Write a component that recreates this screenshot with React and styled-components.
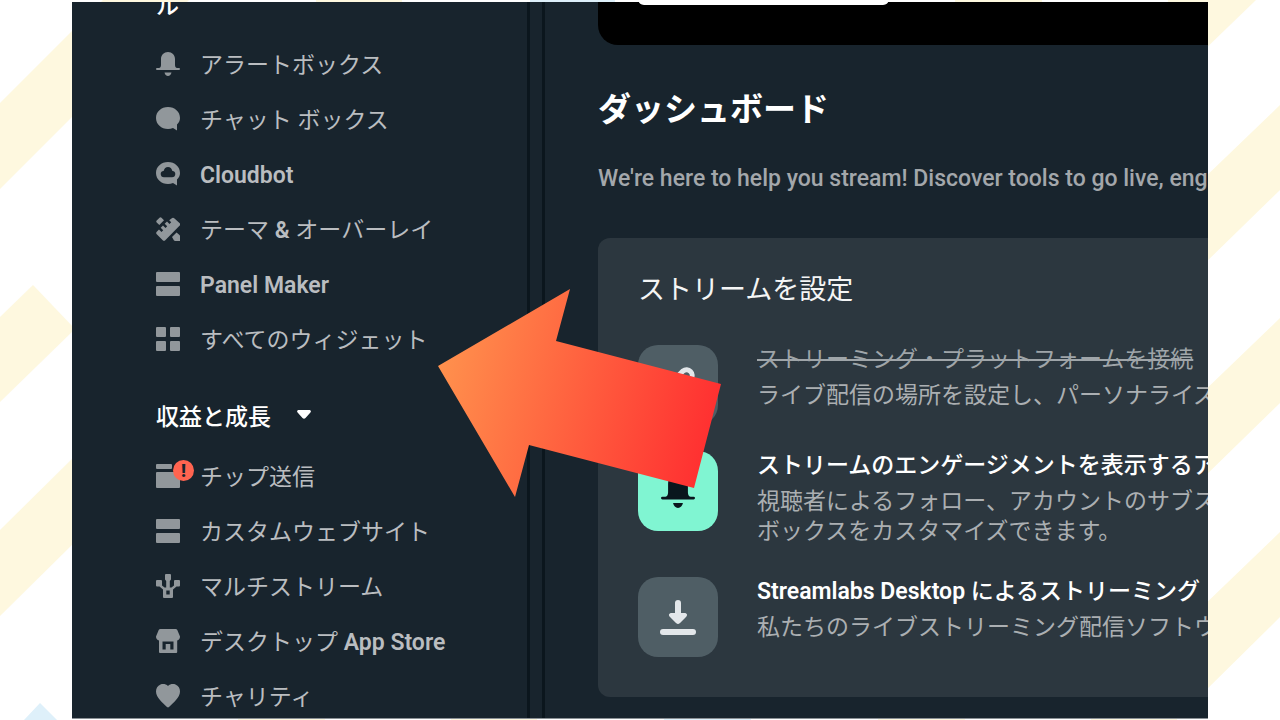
import React from "react";
import styled, { createGlobalStyle } from "styled-components";

const GlobalStyle = createGlobalStyle`
  * {
    box-sizing: border-box;
  }

  body {
    margin: 0;
    background: #fff;
    font-family: Roboto, "Noto Sans CJK JP", sans-serif;
  }
`;

const Page = styled.div`
  position: relative;
  height: 100vh;
  padding: 2px 72px 1px;
  overflow: hidden;
`;

const Backdrop = styled.svg`
  position: absolute;
  inset: 0;
  width: 100%;
  height: 100%;
`;

const Arrow = styled.svg`
  position: absolute;
  left: 438px;
  top: 289px;
  width: 284px;
  height: 209px;
`;

const Frame = styled.div`
  position: relative;
  display: flex;
  gap: 12px;
  height: 100%;
  overflow: hidden;
  border-bottom: 1px solid #8b9196;
  background: #18242d;
`;

const Sidebar = styled.nav`
  flex: 0 0 458px;
  padding-left: 84px;
  border-right: 3px solid #0b161d;
`;

const GroupTitle = styled.h2`
  display: flex;
  align-items: center;
  gap: 26px;
  height: 36px;
  margin: ${(props) => (props.$clipped ? "-16px 0 14px" : "31px 0 15px")};
  font-size: 23px;
  font-weight: 500;
  color: #fff;
`;

const MenuList = styled.ul`
  margin: 0;
  padding: 0;
  list-style: none;
`;

const MenuLink = styled.a`
  display: flex;
  align-items: center;
  gap: 20px;
  height: 55px;
  font-size: 23px;
  font-weight: ${(props) => (props.$latin ? 600 : 400)};
  line-height: 32px;
  color: #babdc0;
  text-decoration: none;
  white-space: nowrap;

  b {
    font-weight: 600;
  }
`;

const MenuLabel = styled.span`
  padding-top: 4px;
`;

const IconBox = styled.span`
  position: relative;
  display: flex;
  width: 24px;
  height: 24px;
  color: #91979b;
`;

const Badge = styled.span`
  position: absolute;
  top: -4px;
  right: -14px;
  width: 21px;
  height: 21px;
  border-radius: 50%;
  background: #ff6450;
  color: #18242d;
  font-size: 18px;
  font-weight: 900;
  line-height: 21px;
  text-align: center;
`;

const Main = styled.main`
  flex: 1;
  min-width: 0;
  padding-left: 53px;
  border-left: 3px solid #0b161d;
  white-space: nowrap;
  overflow: hidden;
`;

const Banner = styled.div`
  display: flex;
  align-items: flex-end;
  height: 43px;
  padding: 0 40px 40px;
  border-radius: 0 0 0 20px;
  background: #000;
`;

const BannerButton = styled.button`
  flex: 0 0 251px;
  height: 40px;
  border: 0;
  border-radius: 6px;
  background: #fff;
`;

const Title = styled.h1`
  margin: 41px 0 0;
  font-size: 33px;
  font-weight: 700;
  line-height: 48px;
  color: #fff;
`;

const Intro = styled.p`
  margin: 29px 0 0;
  font-size: 23px;
  font-weight: 500;
  line-height: 32px;
  color: #a3a7ab;
`;

const Card = styled.section`
  height: 459px;
  margin-top: 43px;
  padding: 32px 0 0 40px;
  border-radius: 12px 0 0 12px;
  background: #2c373f;
`;

const CardTitle = styled.h2`
  margin: 0 0 35px;
  font-size: 27px;
  font-weight: 400;
  line-height: 40px;
  color: #f4f5f5;
`;

const Step = styled.div`
  display: flex;
  gap: 39px;
  min-height: 80px;
  margin-bottom: ${(props) => (props.$tall ? 30 : 26)}px;
`;

const StepIcon = styled.div`
  display: flex;
  flex: 0 0 80px;
  align-items: center;
  justify-content: center;
  height: 80px;
  border-radius: 20px;
  background: ${(props) => (props.$active ? "#80f5d2" : "#4f5e65")};
  color: ${(props) => (props.$active ? "#09161d" : "#e3e7ea")};
`;

const StepTitle = styled.h3`
  margin: -1px 0 5px;
  font-size: 23px;
  font-weight: ${(props) => (props.$done ? 400 : 500)};
  line-height: 32px;
  color: ${(props) => (props.$done ? "#9fa5a9" : "#fff")};
  text-decoration: ${(props) => (props.$done ? "line-through" : "none")};

  b {
    font-weight: 600;
  }
`;

const StepText = styled.p`
  margin: 0;
  font-size: 23px;
  line-height: 30px;
  color: #abafb2;
`;

const icons = {
  bell: (
    <path d="M12 0C8 0 5 3 5 7v6c0 2-1 3-2 3H1a1 1 0 0 0 0 2h22a1 1 0 0 0 0-2h-2c-1 0-2-1-2-3V7c0-4-3-7-7-7zM8.500 20.500h7c-.5 2-1.700 3.500-3.500 3.500s-3-1.500-3.500-3.500z" />
  ),
  chat: (
    <path d="M12 0C5.300 0 0 4.700 0 11s5.300 11 12 11c1.800 0 3.500-.4 5-1l4 2.500V17.500c2-1.700 3-4 3-6.500C24 4.700 18.700 0 12 0z" />
  ),
  cloudbot: (
    <path
      fillRule="evenodd"
      d="M12 0C5.300 0 0 4.700 0 11s5.300 11 12 11c1.800 0 3.500-.4 5-1l4 2.500V17.500c2-1.700 3-4 3-6.500C24 4.700 18.700 0 12 0zM12 5c2.300 0 3.800 1.500 4.200 3.700 2 .4 3.100 1.500 3.100 3.300 0 2-1.300 3.300-3.300 3.300H8c-2 0-3.300-1.300-3.300-3.300 0-1.800 1.100-2.900 3.100-3.300C8.200 6.500 9.700 5 12 5z"
    />
  ),
  design: (
    <>
      <path d="M15.500 1.500a2 2 0 0 1 3 0L23.500 6a2 2 0 0 1 0 2.800L9.500 23a2 2 0 0 1-3 0L1 17.500a2 2 0 0 1 0-3l2-2 2.500 2.500 1.700-1.700-2.500-2.500L7 8.500 9.500 11l1.700-1.700-2.500-2.500L11 4.500 13.500 7l1.700-1.700-2-2z" />
      <path d="M3.500.8a1.500 1.500 0 0 1 2 0L8 3.300 3.300 8 .7 5.500a1.500 1.500 0 0 1 0-2zM16 20l4.500-4.500L23.500 18a2 2 0 0 1 .5 1.500V24h-4.500a2 2 0 0 1-1.500-.5z" />
    </>
  ),
  panels: (
    <>
      <rect width="24" height="10" rx="1" />
      <rect width="24" height="10" y="14" rx="1" />
    </>
  ),
  grid: (
    <>
      <rect width="10" height="10" rx="1" />
      <rect x="14" width="10" height="10" rx="1" />
      <rect y="14" width="10" height="10" rx="1" />
      <rect x="14" y="14" width="10" height="10" rx="1" />
    </>
  ),
  tip: (
    <>
      <rect width="16" height="5" rx="1" />
      <rect y="8" width="24" height="16" rx="1" />
    </>
  ),
  multi: (
    <path
      fillRule="evenodd"
      d="M10 0h4a1 1 0 0 1 1 1v4.500l-1.200 1.500v6.500h1.700l2.500-2V7a1 1 0 0 1 1-1h4a1 1 0 0 1 1 1v4.500a1 1 0 0 1-1 1h-2.500L17 15.500V23a1 1 0 0 1-1 1H8a1 1 0 0 1-1-1v-7.500L3.500 12.500H1a1 1 0 0 1-1-1V7a1 1 0 0 1 1-1h4a1 1 0 0 1 1 1v4.500l2.500 2h1.700V7L9 5.500V1a1 1 0 0 1 1-1zM10.300 16.500v4h3.400v-4z"
    />
  ),
  store: (
    <path
      fillRule="evenodd"
      d="M4.500 0h15a2 2 0 0 1 1.800 1L24 7.500c0 2-1 3.500-2.800 4V23a1 1 0 0 1-1 1H4a1 1 0 0 1-1-1V11.500C1 11 0 9.500 0 7.500L2.700 1A2 2 0 0 1 4.500 0zM6.500 12.500v8h3.200V15h4.600v5.500h3.200v-8z"
    />
  ),
  heart: (
    <path d="M12 2C14 0 17-.5 19.500.5 22.500 1.700 24 4.500 24 7.500c0 6-7 11.500-11 15.500a1.500 1.500 0 0 1-2 0C7 19 0 13.500 0 7.500c0-3 1.500-5.800 4.500-7C7-.5 10 0 12 2z" />
  ),
};

const Icon = ({ name, size = 24 }) => (
  <svg width={size} height={size} viewBox="0 0 24 24" fill="currentColor" aria-hidden="true">
    {icons[name]}
  </svg>
);

const widgets = [
  { icon: "bell", label: "アラートボックス" },
  { icon: "chat", label: "チャット ボックス" },
  { icon: "cloudbot", label: "Cloudbot", latin: true },
  { icon: "design", label: <>テーマ <b>&amp;</b> オーバーレイ</> },
  { icon: "panels", label: "Panel Maker", latin: true },
  { icon: "grid", label: "すべてのウィジェット" },
];

const growth = [
  { icon: "tip", label: "チップ送信", alert: true },
  { icon: "panels", label: "カスタムウェブサイト" },
  { icon: "multi", label: "マルチストリーム" },
  { icon: "store", label: <>デスクトップ <b>App Store</b></> },
  { icon: "heart", label: "チャリティ" },
];

const Menu = ({ items }) => (
  <MenuList>
    {items.map((item, i) => (
      <li key={i}>
        <MenuLink href="#" $latin={item.latin}>
          <IconBox>
            <Icon name={item.icon} />
            {item.alert && <Badge>!</Badge>}
          </IconBox>
          <MenuLabel>{item.label}</MenuLabel>
        </MenuLink>
      </li>
    ))}
  </MenuList>
);

const App = () => {
  return (
    <>
      <GlobalStyle />
      <Page>
        <Backdrop viewBox="0 0 1280 720" preserveAspectRatio="xMidYMid slice" aria-hidden="true">
          <g fill="#fef8df">
            <path d="M0 103L103 0h86L0 189z" />
            <path d="M0 317L33 285 75 329 0 402z" />
            <path d="M0 530L80 451v86L0 616z" />
            <path d="M1200 54V0h56z" />
            <path d="M1200 182L1280 105v85L1200 268z" />
            <path d="M1200 395L1280 318v85L1200 481z" />
            <path d="M1200 609L1280 532v85L1200 696z" />
            <path d="M316 0h86v4h-86zM955 0h87v4h-87zM1168 0h40v4h-40z" />
            <path d="M238 716h87v4h-87zM451 716h86v4h-86zM878 716h87v4h-87zM1091 716h86v4h-86z" />
          </g>
          <path d="M24 720L40 703 57 720zM530 0h85v4h-85zM664 716h87v4h-87z" fill="#def0fa" />
        </Backdrop>

        <Frame>
          <Sidebar>
            <GroupTitle $clipped>ル</GroupTitle>
            <Menu items={widgets} />
            <GroupTitle>
              収益と成長
              <svg width="14" height="12" viewBox="1 0 14 12" fill="#fff" aria-hidden="true">
                <path d="M3 1h10c2 0 2.500 1.500 1.200 2.800L9.500 9c-1 1-2 1-3 0L1.800 3.800C.5 2.500 1 1 3 1z" />
              </svg>
            </GroupTitle>
            <Menu items={growth} />
          </Sidebar>

          <Main>
            <Banner>
              <BannerButton aria-label="開始" />
            </Banner>
            <Title>ダッシュボード</Title>
            <Intro>We're here to help you stream! Discover tools to go live, engage</Intro>

            <Card>
              <CardTitle>ストリームを設定</CardTitle>
              <Step>
                <StepIcon>
                  <svg width="36" height="36" viewBox="0 0 36 36" fill="none" stroke="currentColor" strokeWidth="5" aria-hidden="true">
                    <path d="M16 11l7-7a5.700 5.700 0 0 1 8 8l-7 7M20 25l-7 7a5.700 5.700 0 0 1-8-8l7-7M13 23l10-10" />
                  </svg>
                </StepIcon>
                <div>
                  <StepTitle $done>ストリーミング・プラットフォームを接続</StepTitle>
                  <StepText>ライブ配信の場所を設定し、パーソナライズ</StepText>
                </div>
              </Step>
              <Step $tall>
                <StepIcon $active>
                  <Icon name="bell" size={34} />
                </StepIcon>
                <div>
                  <StepTitle>ストリームのエンゲージメントを表示するア</StepTitle>
                  <StepText>
                    視聴者によるフォロー、アカウントのサブス
                    <br />
                    ボックスをカスタマイズできます。
                  </StepText>
                </div>
              </Step>
              <Step>
                <StepIcon>
                  <svg width="36" height="36" viewBox="0 0 36 36" fill="currentColor" aria-hidden="true">
                    <path d="M15 4a3 3 0 0 1 6 0v10h3c3 0 4 2 2 4l-6 6c-1.500 1.200-2.500 1.200-4 0l-6-6c-2-2-1-4 2-4h3z" />
                    <rect y="30" width="36" height="6" rx="3" />
                  </svg>
                </StepIcon>
                <div>
                  <StepTitle><b>Streamlabs Desktop</b> によるストリーミング</StepTitle>
                  <StepText>私たちのライブストリーミング配信ソフトウ</StepText>
                </div>
              </Step>
            </Card>
          </Main>
        </Frame>

        <Arrow viewBox="438 289 284 209" aria-hidden="true">
          <defs>
            <linearGradient id="heat" gradientUnits="userSpaceOnUse" x1="438" y1="366" x2="707" y2="436">
              <stop offset="0" stopColor="#ff914d" />
              <stop offset="1" stopColor="#ff3131" />
            </linearGradient>
          </defs>
          <path d="M438 366L570 289 556 341 721 384 694 488 529 445 515 497z" fill="url(#heat)" />
        </Arrow>
      </Page>
    </>
  );
};

export default App;
